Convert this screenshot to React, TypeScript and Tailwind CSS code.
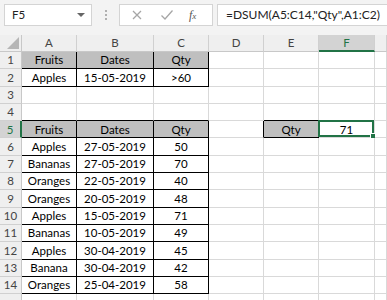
import React from "react"

const cols = ["A", "B", "C", "D", "E", "F", ""]
const widths = ["w-[55px]", "w-[77px]", "w-[55px]", "w-[55px]", "w-[55px]", "w-[56px]", "flex-1"]

type Row = { n: number; cells: string[] }

const rows: Row[] = [
  { n: 1, cells: ["Fruits", "Dates", "Qty"] },
  { n: 2, cells: ["Apples", "15-05-2019", ">60"] },
  { n: 3, cells: [] },
  { n: 4, cells: [] },
  { n: 5, cells: ["Fruits", "Dates", "Qty", "", "Qty", "71"] },
  { n: 6, cells: ["Apples", "27-05-2019", "50"] },
  { n: 7, cells: ["Bananas", "27-05-2019", "70"] },
  { n: 8, cells: ["Oranges", "22-05-2019", "40"] },
  { n: 9, cells: ["Oranges", "20-05-2019", "48"] },
  { n: 10, cells: ["Apples", "15-05-2019", "71"] },
  { n: 11, cells: ["Bananas", "10-05-2019", "49"] },
  { n: 12, cells: ["Apples", "30-04-2019", "45"] },
  { n: 13, cells: ["Banana", "30-04-2019", "42"] },
  { n: 14, cells: ["Oranges", "25-04-2019", "58"] },
  { n: 15, cells: [] },
]

const inTable = (r: number) => r === 1 || r === 2 || (r >= 5 && r <= 14)

function Cell({ row, col, value }: { row: number; col: number; value: string }) {
  const table = col < 3 && inTable(row)
  const filled = (col < 3 && (row === 1 || row === 5)) || (col === 4 && row === 5)
  const selected = col === 5 && row === 5
  // black edges: right side of table cols, bottom of table rows and the row above a table
  const blackRight = table || (col === 3 && row === 5) || (col === 4 && row === 5)
  const blackBottom =
    table || (col < 3 && row === 4) || (col === 4 && (row === 4 || row === 5))

  return (
    <div
      className={`${widths[col]} relative h-full shrink-0 flex items-center justify-center border-r border-b ${
        blackRight ? "border-r-black" : "border-r-[#d9d9d9]"
      } ${blackBottom ? "border-b-black" : "border-b-[#d9d9d9]"} ${filled ? "bg-[#bfbfbf]" : "bg-white"}`}
    >
      <span className="leading-none">{value}</span>
      {selected && (
        <div className="absolute -left-[1px] -top-[1px] right-0 bottom-0 border-2 border-[#217346]">
          <div className="absolute -right-[4px] -bottom-[4px] w-[6px] h-[6px] bg-[#217346] border border-white" />
        </div>
      )}
    </div>
  )
}

export default function App() {
  return (
    <div
      className="w-[387px] h-[300px] overflow-hidden bg-white text-[11.5px] text-black"
      style={{ fontFamily: "Lato, 'Liberation Sans', sans-serif" }}
    >
      {/* formula bar */}
      <div className="h-[35px] bg-[#f3f3f3] flex items-start pt-[4px] pl-[4px]">
        <div className="w-[88px] h-[22px] bg-white border border-[#d4d4d4] flex items-center justify-between pl-[7px] pr-[6px]">
          <span className="text-[11.5px] text-[#222]">F5</span>
          <span className="w-0 h-0 border-l-[4px] border-r-[4px] border-t-[4px] border-l-transparent border-r-transparent border-t-[#666]" />
        </div>
        <div className="w-[27px] h-[22px] flex flex-col items-center justify-center gap-[2px]">
          <span className="w-[2px] h-[2px] bg-[#b0b0b0]" />
          <span className="w-[2px] h-[2px] bg-[#b0b0b0]" />
          <span className="w-[2px] h-[2px] bg-[#b0b0b0]" />
        </div>
        <div className="w-[94px] h-[22px] bg-white border border-[#d4d4d4] flex items-center">
          <svg width="12" height="12" viewBox="0 0 12 12" className="ml-[11px]">
            <path d="M2 2 L10 10 M10 2 L2 10" stroke="#a6a6a6" strokeWidth="1.3" fill="none" />
          </svg>
          <svg width="14" height="12" viewBox="0 0 14 12" className="ml-[17px]">
            <path d="M1.5 6.5 L5 10 L12.5 1.5" stroke="#a6a6a6" strokeWidth="1.3" fill="none" />
          </svg>
          <span
            className="ml-[15px] italic text-[12px] text-[#555]"
            style={{ fontFamily: "'Liberation Serif', serif" }}
          >
            f<span className="text-[9px]">x</span>
          </span>
        </div>
        <div className="flex-1 h-[22px] ml-[4px] bg-white border border-[#d4d4d4] border-r-0 flex items-center pl-[8px]">
          <span className="text-[12px] text-[#222] whitespace-nowrap">=DSUM(A5:C14,"Qty",A1:C2)</span>
        </div>
      </div>

      {/* column headers */}
      <div className="h-[17px] flex bg-[#efefef] text-[#444]">
        <div className="w-[22px] h-full shrink-0 border-r border-b border-[#c8c8c8] relative">
          <svg width="12" height="12" viewBox="0 0 12 12" className="absolute right-[2px] bottom-[2px]">
            <path d="M12 0 L12 12 L0 12 Z" fill="#b6b6b6" />
          </svg>
        </div>
        {cols.map((c, i) => (
          <div
            key={i}
            className={`${widths[i]} h-full shrink-0 flex items-center justify-center border-r border-r-[#d0d0d0] ${
              c === "F"
                ? "bg-[#d3d3d3] border-b-2 border-b-[#217346] text-[#217346]"
                : "border-b border-b-[#c8c8c8]"
            }`}
          >
            <span className="leading-none">{c}</span>
          </div>
        ))}
      </div>

      {/* rows */}
      {rows.map((r) => (
        <div key={r.n} className="h-[17.3px] flex">
          <div
            className={`w-[22px] h-full shrink-0 flex items-center justify-center border-b border-b-[#d0d0d0] ${
              r.n === 5
                ? "bg-[#d3d3d3] border-r-2 border-r-[#217346] text-[#217346]"
                : "bg-[#efefef] border-r border-r-[#c8c8c8] text-[#444]"
            }`}
          >
            <span className="leading-none">{r.n < 15 ? r.n : ""}</span>
          </div>
          {cols.map((c, i) => (
            <Cell key={i} row={r.n} col={i} value={r.cells[i] ?? ""} />
          ))}
        </div>
      ))}
    </div>
  )
}
